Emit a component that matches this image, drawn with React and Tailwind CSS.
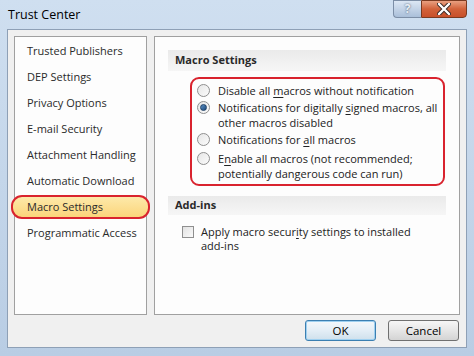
import React from "react";

const font = { fontFamily: '"Open Sans", "Noto Sans", sans-serif' };

function U({ children }) {
  return <span className="underline underline-offset-2">{children}</span>;
}

function Radio({ checked }) {
  return (
    <span className="mt-[1px] flex h-[13px] w-[13px] shrink-0 items-center justify-center rounded-full border border-[#8f8f8f] bg-gradient-to-br from-[#e6e6e6] to-[#fbfbfb]">
      {checked && (
        <span className="h-[7px] w-[7px] rounded-full border border-[#1c3f66] bg-gradient-to-br from-[#5b8fc4] to-[#1d4a7c]" />
      )}
    </span>
  );
}

function Option({ checked, children, className = "" }) {
  return (
    <div className={"flex items-start gap-[8px] " + className}>
      <Radio checked={checked} />
      <div className="leading-[15px]">{children}</div>
    </div>
  );
}

const items = [
  "Trusted Publishers",
  "DEP Settings",
  "Privacy Options",
  "E-mail Security",
  "Attachment Handling",
  "Automatic Download",
  "Macro Settings",
  "Programmatic Access",
];

export default function App() {
  return (
    <div
      className="flex h-[356px] w-[474px] flex-col overflow-hidden bg-gradient-to-b from-[#cfdff0] via-[#c4d6ea] to-[#b9cde4] text-[11px] text-[#222222]"
      style={font}
    >
      {/* Title bar */}
      <div className="flex h-[29px] shrink-0 items-start justify-between pl-[8px]">
        <div className="pt-[6px] text-[12.5px] text-black">Trust Center</div>
        <div className="mr-[7px] flex h-[18px]">
          <div className="flex w-[28px] items-center justify-center rounded-bl-[4px] border border-r-0 border-[#7c8ea6] bg-gradient-to-b from-[#dce7f4] to-[#aabfd9] text-[12px] font-bold text-[#e8eef6] [text-shadow:0_0_2px_#3a4a60]">
            ?
          </div>
          <div className="flex w-[46px] items-center justify-center rounded-br-[4px] border border-[#7a3a20] bg-gradient-to-b from-[#e8a080] via-[#d2623a] to-[#c8502a]">
            <svg width="14" height="12" viewBox="0 0 14 12">
              <path d="M2 1 L12 11 M12 1 L2 11" stroke="#3a2a25" strokeWidth="4.2" strokeLinecap="round" />
              <path d="M2 1 L12 11 M12 1 L2 11" stroke="#ffffff" strokeWidth="2.4" strokeLinecap="round" />
            </svg>
          </div>
        </div>
      </div>

      {/* Client area */}
      <div className="mx-[7px] flex h-[319px] flex-col border border-[#8ea0b6] bg-[#f0f0f0] px-[6px] pt-[6px]">
        <div className="flex h-[279px] gap-[7px]">
          {/* Left list */}
          <div className="w-[133px] shrink-0 border border-[#a0a0a0] bg-[#fdfdfd] pt-[1px]">
            {items.map((it) => {
              const sel = it === "Macro Settings";
              return (
                <div key={it} className="relative flex h-[26px] items-center pl-[12px]">
                  {sel && (
                    <div className="absolute bottom-[1px] left-[-4px] right-[-4px] top-[1px] rounded-[11px] border-2 border-[#d9232e] bg-gradient-to-b from-[#fde9a9] to-[#fbd57a]" />
                  )}
                  <span className="relative text-[#2a2a2a]">{it}</span>
                </div>
              );
            })}
          </div>

          {/* Right content */}
          <div className="flex-1 border border-[#a0a0a0] bg-[#fdfdfd] px-[13px] pt-[13px]">
            <div className="flex h-[21px] items-center bg-gradient-to-b from-[#eaeaea] to-[#f6f6f6] pl-[7px] font-bold text-[#2a2a2a]">
              Macro Settings
            </div>
            <div className="ml-[22px] mr-[1px] mt-[6px] flex flex-col rounded-[9px] border-2 border-[#d9232e] pb-[3px] pl-[5px] pt-[4px]">
              <Option>
                Disable all <U>m</U>acros without notification
              </Option>
              <Option checked className="mt-[2px]">
                Notifications for digitally <U>s</U>igned macros, all
                <br />
                other macros disabled
              </Option>
              <Option className="mt-[2px]">
                Notifications for <U>a</U>ll macros
              </Option>
              <Option className="mt-[4px]">
                E<U>n</U>able all macros (not recommended;
                <br />
                potentially dangerous code can run)
              </Option>
            </div>
            <div className="mt-[10px] flex h-[19px] items-center bg-gradient-to-b from-[#eaeaea] to-[#f6f6f6] pl-[7px] font-bold text-[#2a2a2a]">
              Add-ins
            </div>
            <div className="ml-[14px] mt-[10px] flex items-start gap-[7px]">
              <span className="mt-[1px] h-[12px] w-[12px] shrink-0 border border-[#8f8f8f] bg-gradient-to-br from-[#e2e2e2] to-[#fafafa]" />
              <div className="leading-[14px]">
                Apply macro secur<U>i</U>ty settings to installed
                <br />
                add-ins
              </div>
            </div>
          </div>
        </div>

        {/* Buttons */}
        <div className="mt-[5px] flex justify-end gap-[12px] pr-[1px]">
          <button className="h-[21px] w-[71px] rounded-[3px] border border-[#3c7fb1] bg-gradient-to-b from-[#f4f8fb] via-[#e4eef6] to-[#cfe0ec] text-[11.5px] text-black shadow-[inset_0_0_0_1px_#9fd0f0]">
            OK
          </button>
          <button className="h-[21px] w-[71px] rounded-[3px] border border-[#707070] bg-gradient-to-b from-[#f6f6f6] via-[#e6e6e6] to-[#d4d4d4] text-[11.5px] text-black">
            Cancel
          </button>
        </div>
      </div>
    </div>
  );
}
